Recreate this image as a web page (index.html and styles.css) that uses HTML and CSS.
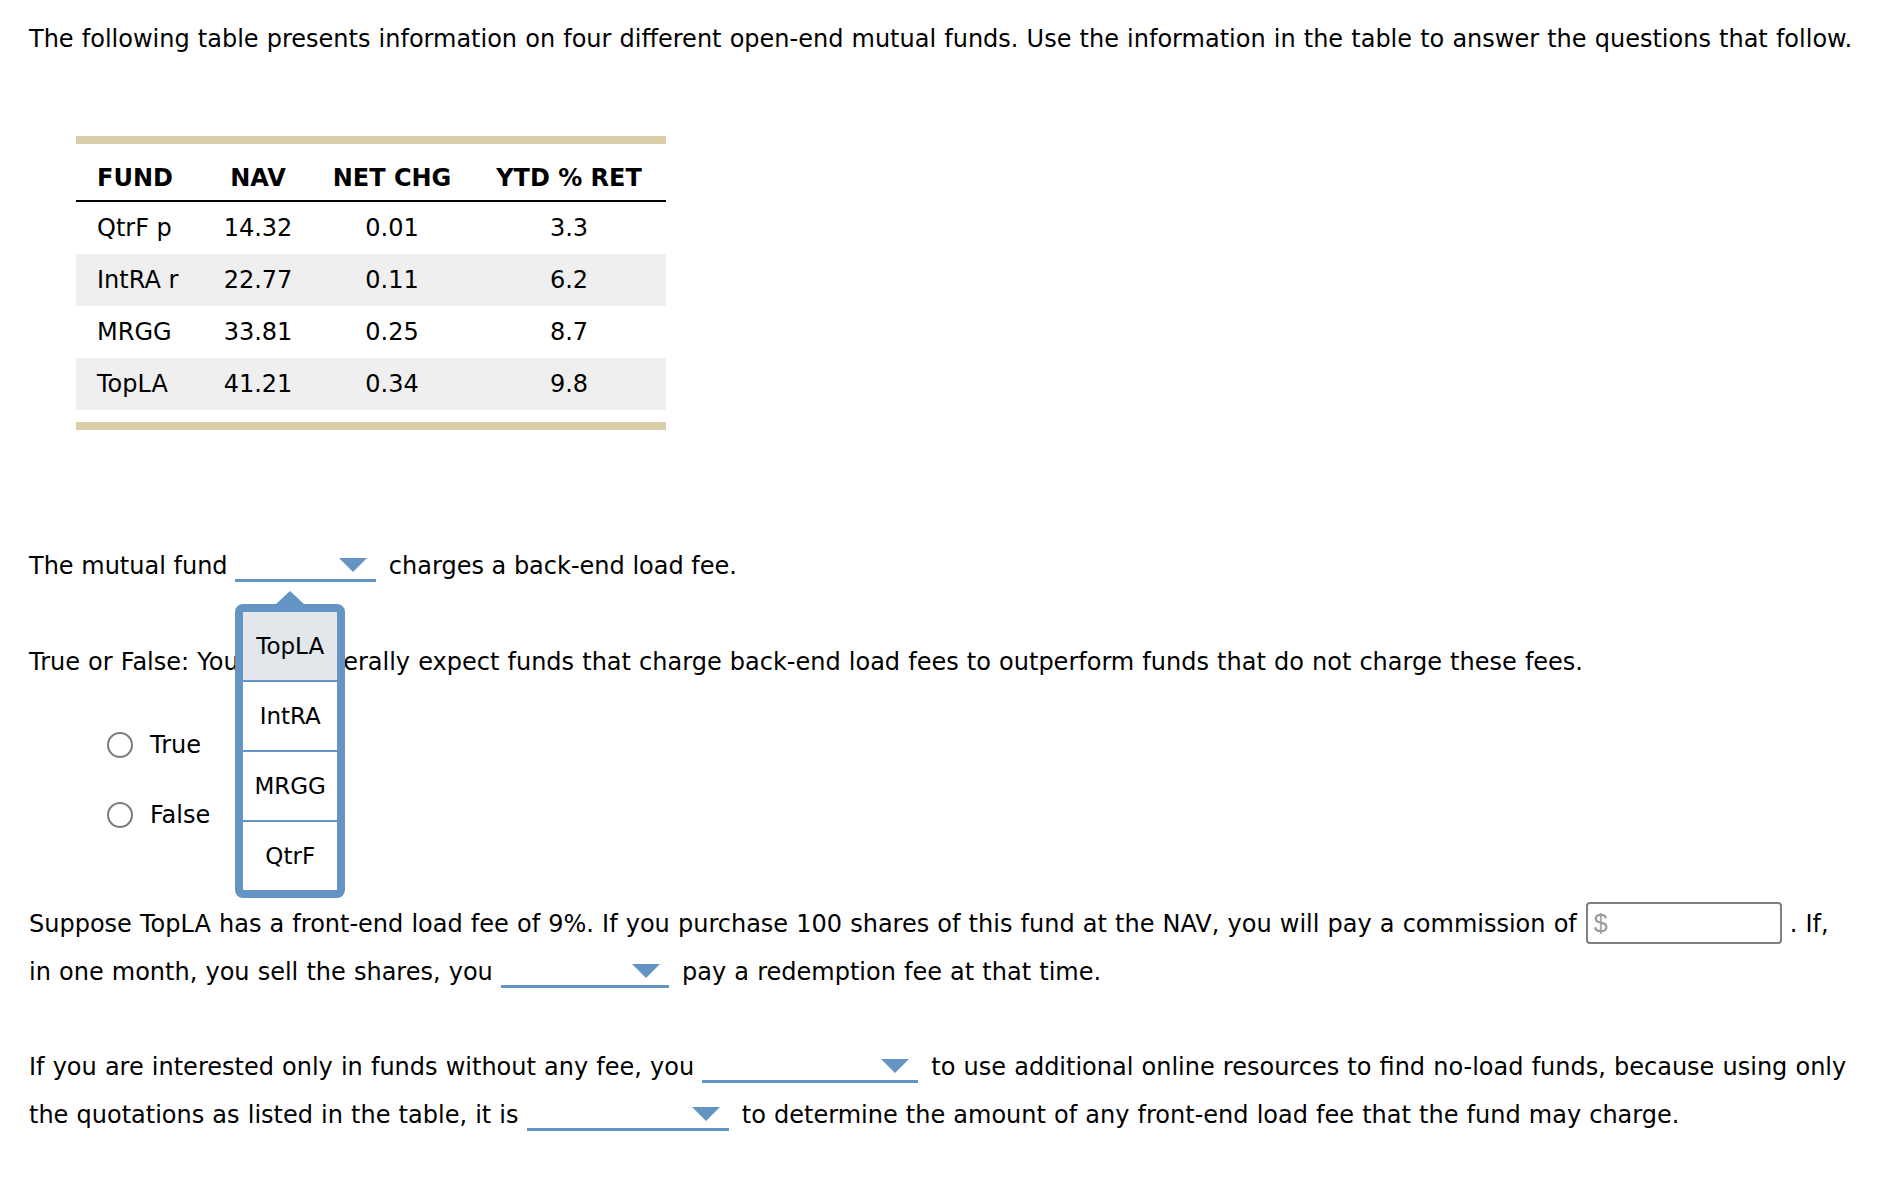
FILE: index.html
```html
<!DOCTYPE html>
<html lang="en">
<head>
<meta charset="utf-8">
<title>Open-end mutual funds</title>
<link rel="stylesheet" href="styles.css">
</head>
<body>
<main class="page">
  <p class="intro">The following table presents information on four different open-end mutual funds. Use the information in the table to answer the questions that follow.</p>

  <div class="fund-table-wrap">
    <table class="fund-table">
      <thead>
        <tr><th class="c-fund">FUND</th><th class="c-nav">NAV</th><th class="c-chg">NET CHG</th><th class="c-ytd">YTD % RET</th></tr>
      </thead>
      <tbody>
        <tr><td class="c-fund">QtrF p</td><td>14.32</td><td>0.01</td><td>3.3</td></tr>
        <tr class="band"><td class="c-fund">IntRA r</td><td>22.77</td><td>0.11</td><td>6.2</td></tr>
        <tr><td class="c-fund">MRGG</td><td>33.81</td><td>0.25</td><td>8.7</td></tr>
        <tr class="band"><td class="c-fund">TopLA</td><td>41.21</td><td>0.34</td><td>9.8</td></tr>
      </tbody>
    </table>
  </div>

  <div class="q q-fund">The mutual fund <span class="dd dd-fund is-open"><svg class="caret" viewBox="0 0 28 14" aria-hidden="true"><polygon points="0,0 28,0 14,14"/></svg><span class="popup" role="listbox"><svg class="popup-arrow" viewBox="0 0 28 13" aria-hidden="true"><polygon points="0,13 14,0 28,13"/></svg><span class="popup-list"><span class="opt active" role="option">TopLA</span><span class="opt" role="option">IntRA</span><span class="opt" role="option">MRGG</span><span class="opt" role="option">QtrF</span></span></span></span> charges a back-end load fee.</div>

  <div class="q q-tf">True or False: You can generally expect funds that charge back-end load fees to outperform funds that do not charge these fees.</div>

  <div class="radio-list">
    <label class="radio"><span class="radio-dot"></span><span>True</span></label>
    <label class="radio"><span class="radio-dot"></span><span>False</span></label>
  </div>

  <div class="q q-load">Suppose TopLA has a front-end load fee of 9%. If you purchase 100 shares of this fund at the NAV, you will pay a commission of<span class="amount"><span class="dollar">$</span></span>. If,<br>in one month, you sell the shares, you <span class="dd dd-sell"><svg class="caret" viewBox="0 0 28 14" aria-hidden="true"><polygon points="0,0 28,0 14,14"/></svg></span> pay a redemption fee at that time.</div>

  <div class="q q-noload">If you are interested only in funds without any fee, you <span class="dd dd-use"><svg class="caret" viewBox="0 0 28 14" aria-hidden="true"><polygon points="0,0 28,0 14,14"/></svg></span> to use additional online resources to find no-load funds, because using only<br>the quotations as listed in the table, it is <span class="dd dd-det"><svg class="caret" viewBox="0 0 28 14" aria-hidden="true"><polygon points="0,0 28,0 14,14"/></svg></span> to determine the amount of any front-end load fee that the fund may charge.</div>
</main>
</body>
</html>
```

FILE: styles.css
```css
* {
  box-sizing: border-box;
}

html,
body {
  margin: 0;
  background: #ffffff;
}

body {
  font-family: "DejaVu Sans", Verdana, sans-serif;
  font-size: 24px;
  color: #000000;
  word-spacing: 0.5px;
}

.page {
  padding: 15px 8px 40px 29px;
}

.intro {
  margin: 0;
  line-height: 48px;
  white-space: nowrap;
}

/* ---------- table ---------- */

.fund-table-wrap {
  width: 590px;
  margin: 73px 0 0 47px;
  padding: 12px 0;
  border-top: 8px solid #dbcda9;
  border-bottom: 8px solid #dbcda9;
}

.fund-table {
  width: 100%;
  table-layout: fixed;
  border-collapse: separate;
  border-spacing: 0;
  word-spacing: 0;
}

.fund-table th {
  padding: 0;
  line-height: 44px;
  font-weight: bold;
  text-align: center;
  border-bottom: 2px solid #000000;
}

.fund-table td {
  padding: 0;
  line-height: 52px;
  text-align: center;
}

.fund-table .c-fund {
  text-align: left;
  padding-left: 21px;
}

.fund-table th.c-fund { width: 128px; }
.fund-table th.c-nav { width: 108px; }
.fund-table th.c-chg { width: 160px; }
.fund-table th.c-ytd { width: 194px; }

.fund-table tr.band td {
  background: #efefef;
}

/* ---------- questions ---------- */

.q {
  line-height: 48px;
  white-space: nowrap;
}

.q-fund { margin-top: 112px; word-spacing: 0; }
.q-tf { margin-top: 48px; }
.q-load { margin-top: 61px; }
.q-noload { margin-top: 47px; }

/* dropdown */
.dd {
  position: relative;
  display: inline-block;
  vertical-align: -8px;
  padding: 0 9px 7px 0;
  margin-right: 5px;
  border-bottom: 3px solid #6494c4;
}

.dd-fund { width: 141px; }
.dd-sell { width: 168px; }
.dd-use { width: 216px; }
.dd-det { width: 202px; }

.caret {
  display: block;
  width: 28px;
  height: 14px;
  margin-left: auto;
  fill: #6494c4;
}

/* open dropdown list */
.popup {
  position: absolute;
  left: 0;
  top: calc(100% + 12px);
  z-index: 5;
  width: 110px;
  display: flex;
  flex-direction: column;
  align-items: center;
  word-spacing: 0;
}

.popup-arrow {
  display: block;
  width: 28px;
  height: 13px;
  fill: #6494c4;
}

.popup-list {
  display: block;
  width: 110px;
  border: 8px solid #6494c4;
  border-radius: 8px;
  background: #ffffff;
  overflow: hidden;
}

.opt {
  display: block;
  height: 68px;
  line-height: 68px;
  font-size: 23px;
  text-align: center;
  color: #000000;
}

.opt + .opt {
  border-top: 2px solid #6494c4;
  height: 70px;
}

.opt.active {
  background: #e1e7ea;
}

/* radios */
.radio-list {
  margin: 35px 0 0 78px;
  display: flex;
  flex-direction: column;
  gap: 22px;
}

.radio {
  display: flex;
  align-items: center;
  gap: 17px;
  line-height: 48px;
}

.radio-dot {
  width: 26px;
  height: 26px;
  border: 2px solid #7b7b7b;
  border-radius: 50%;
  background: #ffffff;
}

/* amount input */
.amount {
  display: inline-block;
  width: 196px;
  height: 42px;
  margin: 0 8px 0 9px;
  padding-left: 6px;
  border: 2px solid #7f7f7f;
  border-radius: 4px;
  line-height: 38px;
  vertical-align: baseline;
}

.dollar {
  font-family: "Liberation Sans", Arial, sans-serif;
  font-size: 25px;
  color: #9a9a9a;
}
```
